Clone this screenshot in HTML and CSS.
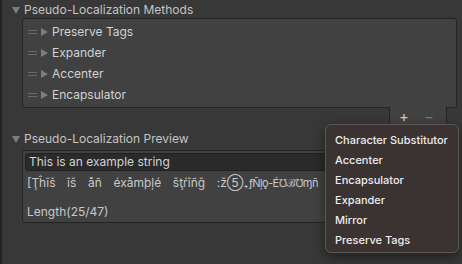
FILE: index.html
```html
<!DOCTYPE html>
<html>
<head>
    <meta charset="utf-8">
    <title>Pseudo-Localization</title>
    <link rel="stylesheet" href="styles.css">
</head>
<body>
<div class="inspector">
    <div class="foldout">
        <span class="arrow-down"></span>
        <span class="foldout-label">Pseudo-Localization Methods</span>
    </div>

    <div class="list-box">
        <div class="list-row"><span class="handle"></span><span class="arrow-right"></span><span class="row-label">Preserve Tags</span></div>
        <div class="list-row"><span class="handle"></span><span class="arrow-right"></span><span class="row-label">Expander</span></div>
        <div class="list-row"><span class="handle"></span><span class="arrow-right"></span><span class="row-label">Accenter</span></div>
        <div class="list-row"><span class="handle"></span><span class="arrow-right"></span><span class="row-label">Encapsulator</span></div>
    </div>
    <div class="list-footer">
        <span class="btn-add">+<span class="drop-caret"></span></span>
        <span class="btn-remove">&minus;</span>
    </div>

    <div class="foldout foldout-preview">
        <span class="arrow-down"></span>
        <span class="foldout-label">Pseudo-Localization Preview</span>
    </div>

    <div class="preview-box">
        <div class="text-field">This is an example string</div>
        <div class="pseudo-line">[Ţĥîš&nbsp;&nbsp; îš&nbsp;&nbsp; åñ&nbsp;&nbsp; éxåmþļé&nbsp;&nbsp; šţŕîñĝ&nbsp;&nbsp; :ž⑤₊<span class="pseudo-tail">ƒÑļǫ-É℧ℬ℧ɱñ</span></div>
        <div class="length-label">Length(25/47)</div>
    </div>

    <div class="popup-menu">
        <div class="menu-item">Character Substitutor</div>
        <div class="menu-item">Accenter</div>
        <div class="menu-item">Encapsulator</div>
        <div class="menu-item">Expander</div>
        <div class="menu-item">Mirror</div>
        <div class="menu-item">Preserve Tags</div>
    </div>
</div>
</body>
</html>
```

FILE: styles.css
```css
* {
    box-sizing: border-box;
    margin: 0;
    padding: 0;
}

html, body {
    width: 462px;
    height: 264px;
    overflow: hidden;
    background: #383838;
    font-family: Inter, "Noto Sans", "DejaVu Sans", sans-serif;
    font-size: 12px;
    color: #c4c4c4;
}

.inspector {
    position: relative;
    height: 264px;
    border-left: 2px solid #232323;
    padding: 2px 5px 0 9px;
    display: flex;
    flex-direction: column;
}

.foldout {
    display: flex;
    align-items: center;
    height: 16px;
}

.foldout-preview {
    margin-top: 4px;
}

.arrow-down {
    width: 0;
    height: 0;
    border-left: 4px solid transparent;
    border-right: 4px solid transparent;
    border-top: 7px solid #7d7d7d;
    margin: 1px 4px 0 1px;
}

.foldout-label {
    line-height: 16px;
}

.list-box {
    margin-left: 11px;
    background: #414141;
    border: 1px solid #242424;
    border-radius: 3px;
    padding: 2px 0 1px;
    height: 90px;
}

.list-row {
    display: flex;
    align-items: center;
    height: 21px;
    padding-left: 5px;
}

.handle {
    width: 9px;
    height: 4px;
    border-top: 1px solid #6a6a6a;
    border-bottom: 1px solid #6a6a6a;
    margin-right: 4px;
}

.arrow-right {
    width: 0;
    height: 0;
    border-top: 4px solid transparent;
    border-bottom: 4px solid transparent;
    border-left: 7px solid #7d7d7d;
    margin-right: 4px;
}

.row-label {
    color: #d2d2d2;
}

.list-footer {
    align-self: flex-end;
    margin-right: 10px;
    margin-top: -1px;
    width: 58px;
    height: 20px;
    background: #414141;
    border: 1px solid #242424;
    border-top: none;
    border-radius: 0 0 3px 3px;
    display: flex;
    align-items: center;
    padding-left: 9px;
    gap: 15px;
    font-size: 15px;
}

.btn-add {
    position: relative;
    color: #c8c8c8;
    line-height: 16px;
}

.drop-caret {
    position: absolute;
    right: -2px;
    bottom: -2px;
    width: 0;
    height: 0;
    border-left: 2px solid transparent;
    border-right: 2px solid transparent;
    border-top: 2px solid #c8c8c8;
}

.btn-remove {
    color: #7a7a7a;
    line-height: 16px;
}

.preview-box {
    margin-left: 11px;
    margin-top: 3px;
    background: #414141;
    border: 1px solid #242424;
    border-radius: 3px;
    padding: 2px 2px 0;
    height: 73px;
}

.text-field {
    height: 18px;
    background: #2a2a2a;
    border: 1px solid #212121;
    border-radius: 3px;
    padding-left: 3px;
    line-height: 16px;
    color: #d2d2d2;
}

/* the string runs up to the popup's left edge */
.pseudo-line {
    width: 299px;
    margin-top: 3px;
    padding-left: 2px;
    line-height: 18px;
    white-space: nowrap;
    overflow: hidden;
    word-spacing: 0.5px;
    color: #c8c8c8;
}

.pseudo-tail {
    font-size: 11px;
    letter-spacing: -0.6px;
}

.length-label {
    margin-top: 12px;
    padding-left: 2px;
    line-height: 16px;
    color: #c8c8c8;
}

.popup-menu {
    position: absolute;
    left: 323px;
    top: 124px;
    width: 134px;
    height: 129px;
    background: #3b3331;
    border: 1px solid #5c5755;
    border-radius: 6px;
    box-shadow: 0 4px 12px rgba(0, 0, 0, 0.45);
    padding: 5px 0 4px 9px;
}

.menu-item {
    height: 20px;
    line-height: 20px;
    font-size: 11px;
    font-weight: 500;
    color: #ececec;
    white-space: nowrap;
}
```
